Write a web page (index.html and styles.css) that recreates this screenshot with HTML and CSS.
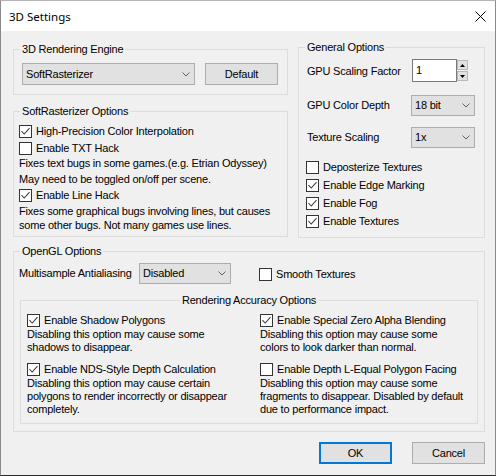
FILE: index.html
```html
<!DOCTYPE html>
<html>
<head>
<meta charset="utf-8">
<title>3D Settings</title>
<link rel="stylesheet" href="styles.css">
</head>
<body>
<div class="window">
  <div class="titlebar">
    <span class="title">3D Settings</span>
    <svg class="close" width="11" height="11" viewBox="0 0 11 11"><path d="M0.5 0.5 L10.5 10.5 M10.5 0.5 L0.5 10.5" stroke="#000" stroke-width="1" fill="none"/></svg>
  </div>
  <div class="client">
    <div class="top">
      <div class="col-left">
        <fieldset class="gb gb-engine">
          <legend>3D Rendering Engine</legend>
          <div class="engine-body">
            <div class="combo combo-engine"><span>SoftRasterizer</span><svg class="chev" width="8" height="5" viewBox="0 0 8 5"><polyline points="0.5,0.5 4,4 7.5,0.5" fill="none" stroke="#606060" stroke-width="1"/></svg></div>
            <div class="btn btn-default">Default</div>
          </div>
        </fieldset>
        <fieldset class="gb gb-soft">
          <legend>SoftRasterizer Options</legend>
          <div class="soft-body">
            <div class="cbrow"><span class="cb on"><svg width="11" height="11" viewBox="0 0 11 11"><polyline points="1.5,5.2 4.2,8 9.5,2.2" fill="none" stroke="#3c3c3c" stroke-width="1.05"/></svg></span><span>High-Precision Color Interpolation</span></div>
            <div class="cbrow s-txt"><span class="cb"></span><span>Enable TXT Hack</span></div>
            <div class="note s-note1">Fixes text bugs in some games.(e.g. Etrian Odyssey)</div>
            <div class="note s-note2">May need to be toggled on/off per scene.</div>
            <div class="cbrow s-line"><span class="cb on"><svg width="11" height="11" viewBox="0 0 11 11"><polyline points="1.5,5.2 4.2,8 9.5,2.2" fill="none" stroke="#3c3c3c" stroke-width="1.05"/></svg></span><span>Enable Line Hack</span></div>
            <div class="note note14 s-note3">Fixes some graphical bugs involving lines, but causes<br>some other bugs. Not many games use lines.</div>
          </div>
        </fieldset>
      </div>
      <fieldset class="gb gb-general">
        <legend>General Options</legend>
        <div class="general-body">
          <div class="grow g-scale">
            <span class="glabel glabel-scale">GPU Scaling Factor</span>
            <div class="edit">1</div>
            <div class="spin">
              <div class="spinbtn"><svg width="5" height="3" viewBox="0 0 5 3"><polygon points="2.5,0 5,3 0,3" fill="#000"/></svg></div>
              <div class="spinbtn"><svg width="5" height="3" viewBox="0 0 5 3"><polygon points="0,0 5,0 2.5,3" fill="#000"/></svg></div>
            </div>
          </div>
          <div class="grow g-depth">
            <span class="glabel">GPU Color Depth</span>
            <div class="combo combo-small"><span>18 bit</span><svg class="chev" width="8" height="5" viewBox="0 0 8 5"><polyline points="0.5,0.5 4,4 7.5,0.5" fill="none" stroke="#606060" stroke-width="1"/></svg></div>
          </div>
          <div class="grow g-tex">
            <span class="glabel">Texture Scaling</span>
            <div class="combo combo-small"><span>1x</span><svg class="chev" width="8" height="5" viewBox="0 0 8 5"><polyline points="0.5,0.5 4,4 7.5,0.5" fill="none" stroke="#606060" stroke-width="1"/></svg></div>
          </div>
          <div class="gchecks">
            <div class="cbrow"><span class="cb"></span><span>Deposterize Textures</span></div>
            <div class="cbrow"><span class="cb on"><svg width="11" height="11" viewBox="0 0 11 11"><polyline points="1.5,5.2 4.2,8 9.5,2.2" fill="none" stroke="#3c3c3c" stroke-width="1.05"/></svg></span><span>Enable Edge Marking</span></div>
            <div class="cbrow"><span class="cb on"><svg width="11" height="11" viewBox="0 0 11 11"><polyline points="1.5,5.2 4.2,8 9.5,2.2" fill="none" stroke="#3c3c3c" stroke-width="1.05"/></svg></span><span>Enable Fog</span></div>
            <div class="cbrow"><span class="cb on"><svg width="11" height="11" viewBox="0 0 11 11"><polyline points="1.5,5.2 4.2,8 9.5,2.2" fill="none" stroke="#3c3c3c" stroke-width="1.05"/></svg></span><span>Enable Textures</span></div>
          </div>
        </div>
      </fieldset>
    </div>

    <fieldset class="gb gb-opengl">
      <legend>OpenGL Options</legend>
      <div class="opengl-body">
        <div class="msrow">
          <span class="mslabel">Multisample Antialiasing</span>
          <div class="combo combo-ms"><span>Disabled</span><svg class="chev" width="8" height="5" viewBox="0 0 8 5"><polyline points="0.5,0.5 4,4 7.5,0.5" fill="none" stroke="#606060" stroke-width="1"/></svg></div>
          <div class="cbrow smooth"><span class="cb"></span><span>Smooth Textures</span></div>
        </div>
        <fieldset class="gb gb-accuracy">
          <legend class="centered">Rendering Accuracy Options</legend>
          <div class="accuracy-body">
            <div class="cell">
              <div class="cbrow"><span class="cb on"><svg width="11" height="11" viewBox="0 0 11 11"><polyline points="1.5,5.2 4.2,8 9.5,2.2" fill="none" stroke="#3c3c3c" stroke-width="1.05"/></svg></span><span>Enable Shadow Polygons</span></div>
              <div class="note desc">Disabling this option may cause some<br>shadows to disappear.</div>
            </div>
            <div class="cell">
              <div class="cbrow"><span class="cb on"><svg width="11" height="11" viewBox="0 0 11 11"><polyline points="1.5,5.2 4.2,8 9.5,2.2" fill="none" stroke="#3c3c3c" stroke-width="1.05"/></svg></span><span>Enable Special Zero Alpha Blending</span></div>
              <div class="note desc">Disabling this option may cause some<br>colors to look darker than normal.</div>
            </div>
            <div class="cell">
              <div class="cbrow"><span class="cb on"><svg width="11" height="11" viewBox="0 0 11 11"><polyline points="1.5,5.2 4.2,8 9.5,2.2" fill="none" stroke="#3c3c3c" stroke-width="1.05"/></svg></span><span>Enable NDS-Style Depth Calculation</span></div>
              <div class="note desc">Disabling this option may cause certain<br>polygons to render incorrectly or disappear<br>completely.</div>
            </div>
            <div class="cell">
              <div class="cbrow"><span class="cb"></span><span>Enable Depth L-Equal Polygon Facing</span></div>
              <div class="note desc">Disabling this option may cause some<br>fragments to disappear. Disabled by default<br>due to performance impact.</div>
            </div>
          </div>
        </fieldset>
      </div>
    </fieldset>

    <div class="buttons">
      <div class="btn btn-ok">OK</div>
      <div class="btn">Cancel</div>
    </div>
  </div>
</div>
</body>
</html>
```

FILE: styles.css
```css
* { box-sizing: border-box; }
html, body { margin: 0; padding: 0; }
body {
  width: 496px;
  height: 476px;
  overflow: hidden;
  background: #f0f0f0;
  font-family: "Liberation Sans", Arial, sans-serif;
  font-size: 11px;
  letter-spacing: -0.2px;
  color: #000;
}
.window {
  width: 496px;
  height: 476px;
  border: 1px solid #8a8a8a;
  border-top-color: #b4b4b4;
  border-bottom-color: #2b2b2b;
  background: #f0f0f0;
  display: flex;
  flex-direction: column;
}
.titlebar {
  flex: none;
  height: 30px;
  background: #fff;
  display: flex;
  align-items: center;
  justify-content: space-between;
  padding: 0 9px 0 8px;
}
.title {
  font-family: "Noto Sans", "Open Sans", sans-serif;
  font-size: 11.5px;
  letter-spacing: 0;
  color: #000;
}
.close { display: block; }
.client { padding: 10px 10px 0 12px; }
.top {
  display: grid;
  grid-template-columns: 275px 187px;
  column-gap: 10px;
  align-items: start;
}
.col-left {
  padding-top: 2px;
  display: flex;
  flex-direction: column;
  gap: 10px;
}
fieldset.gb {
  margin: 0;
  padding: 0;
  border: 1px solid #dcdcdc;
  min-width: 0;
}
.gb > legend {
  margin-left: 6px;
  padding: 0 2px;
  height: 13px;
  line-height: 13px;
  font-size: 11px;
  white-space: nowrap;
}
.gb > legend.centered { margin: 0 auto; }

/* controls */
.combo {
  display: flex;
  align-items: center;
  justify-content: space-between;
  background: #e1e1e1;
  border: 1px solid #adadad;
  padding: 0 4px 0 3px;
  line-height: 13px;
  white-space: nowrap;
}
.chev { display: block; flex: none; }
.btn {
  width: 73px;
  height: 22px;
  background: #e1e1e1;
  border: 1px solid #adadad;
  display: flex;
  align-items: center;
  justify-content: center;
  line-height: 13px;
}
.btn-ok { border: 2px solid #0078d7; }
.cb {
  flex: none;
  width: 13px;
  height: 13px;
  border: 1px solid #333;
  background: #fff;
  display: block;
}
.cb svg { display: block; }
.cbrow {
  display: flex;
  align-items: center;
  gap: 4px;
  height: 13px;
  line-height: 13px;
  white-space: nowrap;
}
.note {
  line-height: 13px;
  white-space: nowrap;
}
.note14 { line-height: 14px; }

/* 3D rendering engine */
fieldset.gb-engine { height: 52px; }
.engine-body {
  padding: 7px 0 0 8px;
  display: flex;
  gap: 10px;
}
.combo-engine { width: 173px; height: 22px; }

/* softrasterizer */
fieldset.gb-soft { height: 132px; }
.soft-body { padding: 7px 0 0 5px; }
.s-txt { margin-top: 4px; }
.s-note1 { margin-top: 2px; }
.s-note2 { margin-top: 3px; }
.s-line { margin-top: 3px; }
.s-note3 { margin-top: 2px; }

/* general options */
fieldset.gb-general { height: 197px; }
.general-body { padding: 5px 0 0 8px; }
.grow { display: flex; align-items: center; }
.glabel { width: 104px; flex: none; white-space: nowrap; line-height: 13px; }
.glabel-scale { width: 105px; }
.g-scale { height: 23px; align-items: flex-start; }
.g-scale .glabel { margin-top: 6px; }
.edit {
  width: 45px;
  height: 23px;
  background: #fff;
  border: 1px solid #7a7a7a;
  padding: 0 3px;
  line-height: 20px;
}
.spin {
  margin-top: 1px;
  display: flex;
  flex-direction: column;
  gap: 1px;
}
.spinbtn {
  width: 11px;
  height: 10px;
  background: #e1e1e1;
  border: 1px solid #b9b9b9;
  display: flex;
  align-items: center;
  justify-content: center;
}
.spinbtn svg { display: block; }
.g-depth { margin-top: 13px; }
.g-tex { margin-top: 11px; }
.combo-small { width: 64px; height: 21px; }
.gchecks {
  margin-top: 13px;
  margin-left: -1px;
  display: flex;
  flex-direction: column;
  gap: 5px;
}

/* opengl */
fieldset.gb-opengl { margin-top: 7px; height: 187px; }
.opengl-body { padding: 5px 5px 7px 5px; }
.msrow { display: flex; align-items: center; height: 21px; }
.mslabel { width: 120px; flex: none; white-space: nowrap; line-height: 13px; }
.combo-ms { width: 92px; height: 21px; }
.smooth { margin-left: 28px; margin-top: 2px; }
fieldset.gb-accuracy { margin: 10px 1px 0 1px; height: 130px; }
.accuracy-body {
  padding: 7px 0 0 6px;
  display: grid;
  grid-template-columns: 233px auto;
  row-gap: 9px;
}
.desc { margin-top: 1px; }

/* buttons */
.buttons {
  margin-top: 10px;
  display: flex;
  justify-content: flex-end;
  gap: 20px;
}
```
